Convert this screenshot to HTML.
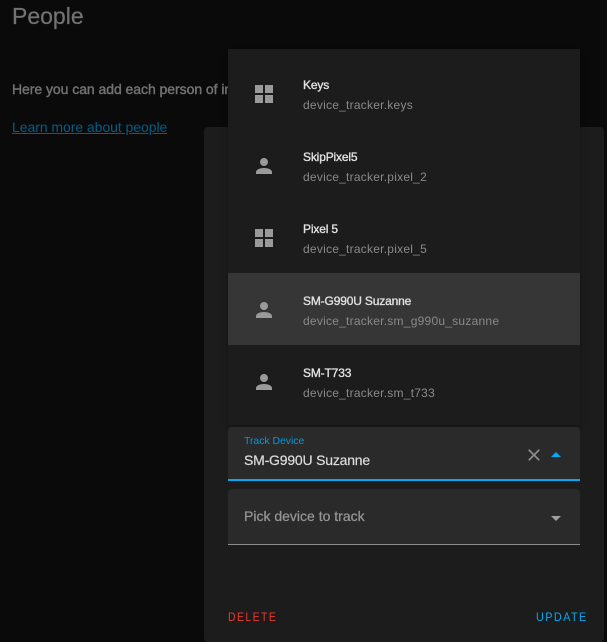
<!DOCTYPE html>
<html><head><meta charset="utf-8"><style>
html,body{margin:0;padding:0;width:607px;height:642px;overflow:hidden;background:#0a0a0a;font-family:"Liberation Sans",sans-serif}
.a{position:absolute;white-space:nowrap}
svg{position:absolute;fill:#9a9a9a}
.t{position:absolute;left:303px;font-size:12px;color:#e1e1e1;line-height:14px;white-space:nowrap;-webkit-text-stroke:.35px #e1e1e1;letter-spacing:-.16px}
.s{position:absolute;left:303px;font-size:12px;color:#8a8a8a;line-height:14px;white-space:nowrap;letter-spacing:.24px}
</style></head><body>
<div class="a" style="left:12px;top:2px;font-size:23px;line-height:28px;color:#737373;-webkit-text-stroke:.2px #737373">People</div>
<div class="a" style="left:12px;top:81px;font-size:14px;line-height:16px;color:#737373;-webkit-text-stroke:.4px #737373;letter-spacing:-.05px">Here you can add each person of interest</div>
<div class="a" style="left:12px;top:119px;font-size:14px;line-height:16px;color:#025f88;text-decoration:underline;letter-spacing:-.05px">Learn more about people</div>

<div class="a" style="left:204px;top:127px;width:400px;height:515px;background:#1c1c1c;border-radius:4px"></div>

<div class="a" style="left:228px;top:49px;width:352px;height:376px;background:#1c1c1c;border-radius:0 0 4px 4px;box-shadow:0 3px 6px rgba(0,0,0,.25)"></div>
<div class="a" style="left:228px;top:273px;width:352px;height:72px;background:#363636"></div>

<svg style="left:252px;top:82px" width="24" height="24" viewBox="0 0 24 24"><path d="M3 3h8v8H3zM13 3h8v8h-8zM3 13h8v8H3zM13 13h8v8h-8z"/></svg>
<svg style="left:252px;top:154px" width="24" height="24" viewBox="0 0 24 24"><path d="M12 4a4 4 0 1 1 0 8 4 4 0 0 1 0-8zm0 10c4.42 0 8 1.79 8 4v2H4v-2c0-2.21 3.58-4 8-4z"/></svg>
<svg style="left:252px;top:226px" width="24" height="24" viewBox="0 0 24 24"><path d="M3 3h8v8H3zM13 3h8v8h-8zM3 13h8v8H3zM13 13h8v8h-8z"/></svg>
<svg style="left:252px;top:298px" width="24" height="24" viewBox="0 0 24 24"><path d="M12 4a4 4 0 1 1 0 8 4 4 0 0 1 0-8zm0 10c4.42 0 8 1.79 8 4v2H4v-2c0-2.21 3.58-4 8-4z"/></svg>
<svg style="left:252px;top:370px" width="24" height="24" viewBox="0 0 24 24"><path d="M12 4a4 4 0 1 1 0 8 4 4 0 0 1 0-8zm0 10c4.42 0 8 1.79 8 4v2H4v-2c0-2.21 3.58-4 8-4z"/></svg>

<div class="t" style="top:78px">Keys</div><div class="s" style="top:98px">device_tracker.keys</div>
<div class="t" style="top:150px">SkipPixel5</div><div class="s" style="top:170px">device_tracker.pixel_2</div>
<div class="t" style="top:222px">Pixel 5</div><div class="s" style="top:242px">device_tracker.pixel_5</div>
<div class="t" style="top:294px">SM-G990U Suzanne</div><div class="s" style="top:314px">device_tracker.sm_g990u_suzanne</div>
<div class="t" style="top:366px">SM-T733</div><div class="s" style="top:386px">device_tracker.sm_t733</div>

<div class="a" style="left:228px;top:427px;width:352px;height:52px;background:#2a2a2a;border-radius:4px 4px 0 0;border-bottom:2px solid #03a9f4"></div>
<div class="a" style="left:244px;top:435px;font-size:10.5px;line-height:12px;color:#0398dc;letter-spacing:-.05px">Track Device</div>
<div class="a" style="left:244px;top:452px;font-size:14px;line-height:16px;color:#dcdcdc;letter-spacing:-.2px;-webkit-text-stroke:.2px #dcdcdc">SM-G990U Suzanne</div>
<svg style="left:524px;top:445px;fill:#8f8f8f" width="20" height="20" viewBox="0 0 24 24"><path d="M19 6.41 17.59 5 12 10.59 6.41 5 5 6.41 10.59 12 5 17.59 6.41 19 12 13.41 17.59 19 19 17.59 13.41 12z"/></svg>
<svg style="left:544px;top:442px;fill:#03a9f4" width="24" height="24" viewBox="0 0 24 24"><path d="M7 15l5-5 5 5z"/></svg>

<div class="a" style="left:228px;top:489px;width:352px;height:55px;background:#2a2a2a;border-radius:4px 4px 0 0;border-bottom:1px solid #8c8c8c"></div>
<div class="a" style="left:244px;top:508px;font-size:14px;line-height:16px;color:#959595;letter-spacing:0;-webkit-text-stroke:.25px #959595">Pick device to track</div>
<svg style="left:544px;top:506px;fill:#a0a0a0" width="24" height="24" viewBox="0 0 24 24"><path d="M7 10l5 5 5-5z"/></svg>

<div class="a" style="left:228px;top:610px;font-size:12px;line-height:14px;letter-spacing:1.6px;color:#e53a2e;transform:scaleX(.875);transform-origin:0 0">DELETE</div>
<div class="a" style="left:536px;top:610px;font-size:12px;line-height:14px;letter-spacing:1.6px;color:#03a9f4;transform:scaleX(.9);transform-origin:0 0">UPDATE</div>
</body></html>
